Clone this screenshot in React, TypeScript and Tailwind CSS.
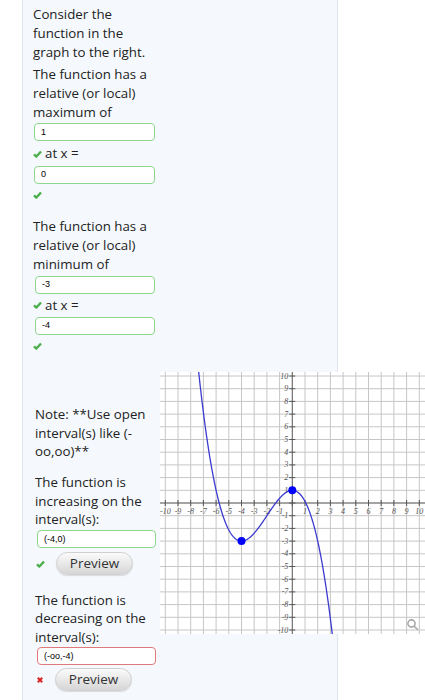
import React from "react";

const U = 12.7;
const OX = 132.3;
const OY = 131;
const X = (u: number) => OX + U * u;
const Y = (v: number) => OY - U * v;
const f = (x: number) => -(x * x * x) / 8 - (3 * x * x) / 4 + 1;

const steps = Array.from({ length: 21 }, (_, i) => i - 10);

function curvePath() {
  const pts: string[] = [];
  for (let x = -7.8; x <= 3.4; x += 0.05) {
    pts.push(`${X(x).toFixed(2)},${Y(f(x)).toFixed(2)}`);
  }
  return "M" + pts.join(" L");
}

function Graph() {
  return (
    <svg width="265" height="262" viewBox="0 0 265 262" className="block bg-white">
      {steps.map((s) => (
        <g key={s}>
          <line x1={X(s)} y1={0} x2={X(s)} y2={262} stroke="#c6c6c6" strokeWidth="1" />
          <line x1={0} y1={Y(s)} x2={265} y2={Y(s)} stroke="#c6c6c6" strokeWidth="1" />
        </g>
      ))}
      <line x1={0} y1={Y(0)} x2={265} y2={Y(0)} stroke="#666" strokeWidth="1" />
      <line x1={X(0)} y1={0} x2={X(0)} y2={262} stroke="#666" strokeWidth="1" />
      {steps.map((s) => (
        <g key={"t" + s}>
          <line x1={X(s)} y1={Y(0) - 3} x2={X(s)} y2={Y(0) + 3} stroke="#555" strokeWidth="1" />
          <line x1={X(0) - 3} y1={Y(s)} x2={X(0) + 3} y2={Y(s)} stroke="#555" strokeWidth="1" />
        </g>
      ))}
      {steps
        .filter((s) => s !== 0)
        .map((s) => (
          <g
            key={"l" + s}
            fill="#555"
            fontSize="8"
            fontStyle="italic"
            fontFamily="'Liberation Serif', serif"
          >
            <text x={X(s)} y={Y(0) + 10.5} textAnchor="middle">
              {s}
            </text>
            <text x={X(0) - 4} y={Y(s) + 2.5} textAnchor="end">
              {s}
            </text>
          </g>
        ))}
      <path d={curvePath()} fill="none" stroke="#3b3bd0" strokeWidth="1.3" />
      <circle cx={X(-4)} cy={Y(-3)} r="4" fill="#0000ff" />
      <circle cx={X(0)} cy={Y(1)} r="4" fill="#0000ff" />
      <g stroke="#a8a8a8" strokeWidth="1.6" fill="none">
        <circle cx="251.5" cy="251.5" r="3.6" />
        <line x1="254.2" y1="254.2" x2="257.5" y2="257.5" strokeLinecap="round" />
      </g>
    </svg>
  );
}

function Check() {
  return (
    <svg width="9" height="8" viewBox="0 0 9 8" className="shrink-0">
      <path d="M1 4.3 L3.4 6.6 L8 1.4" fill="none" stroke="#4aae4a" strokeWidth="2.3" strokeLinejoin="round" />
    </svg>
  );
}

function Cross() {
  return (
    <svg width="6" height="6" viewBox="0 0 6 6" className="shrink-0">
      <path d="M0.8 0.8 L5.2 5.2 M5.2 0.8 L0.8 5.2" stroke="#d22" strokeWidth="2" />
    </svg>
  );
}

function Answer({ value, bad, className }: { value: string; bad?: boolean; className: string }) {
  return (
    <input
      readOnly
      value={value}
      className={
        "block h-[18px] rounded-[4px] border-[1.5px] bg-white px-[6px] text-[9px] text-black outline-none [font-family:'Liberation_Sans',Arial,sans-serif] " +
        (bad ? "border-[#e07a7a] " : "border-[#8ed68e] ") +
        className
      }
    />
  );
}

function Preview({ className }: { className: string }) {
  return (
    <button
      className={
        "h-[23px] w-[77px] rounded-full border border-[#d0d0d0] bg-linear-to-b from-[#fbfbfb] to-[#d6d6d6] text-[13.5px] leading-none text-[#333] shadow-[0_1px_1px_rgba(0,0,0,0.12)] " +
        className
      }
    >
      Preview
    </button>
  );
}

export default function App() {
  return (
    <div className="relative h-[700px] w-[425px] overflow-hidden bg-white text-[13.3px] text-[#222] [font-family:'Open_Sans',sans-serif]">
      <div className="ml-[22px] h-[700px] w-[316px] border-x border-[#dfe5ec] bg-[#f5f9fd] pl-[10px]">
        <div className="w-[124px] whitespace-nowrap leading-[19px]">
          <p className="pt-[5px]">
            Consider the
            <br />
            function in the
            <br />
            graph to the right.
          </p>
          <p className="mt-[2.5px]">
            The function has a
            <br />
            relative (or local)
            <br />
            maximum of
          </p>
          <Answer value="1" className="mt-[1.5px] ml-[1px] w-[121px]" />
          <div className="mt-[3px] flex items-center">
            <Check />
            <span className="ml-[3px]">at x =</span>
          </div>
          <Answer value="0" className="mt-[2.5px] ml-[1px] w-[121px]" />
          <div className="mt-[2.3px] flex h-[19px] items-center">
            <Check />
          </div>
          <p className="mt-[12.5px]">
            The function has a
            <br />
            relative (or local)
            <br />
            minimum of
          </p>
          <Answer value="-3" className="mt-[1.5px] ml-[2px] w-[120px]" />
          <div className="mt-[2.2px] flex items-center">
            <Check />
            <span className="ml-[3px]">at x =</span>
          </div>
          <Answer value="-4" className="mt-[2px] ml-[2px] w-[120px]" />
          <div className="mt-[1.2px] flex h-[19px] items-center">
            <Check />
          </div>
        </div>
        <div className="w-[124px] whitespace-nowrap pl-[2px] leading-[18.5px]">
          <p className="mt-[50px]">
            Note: **Use open
            <br />
            interval(s) like (-
            <br />
            oo,oo)**
          </p>
          <p className="mt-[12.8px]">
            The function is
            <br />
            increasing on the
            <br />
            interval(s):
          </p>
          <Answer value="(-4,0)" className="mt-[1.5px] ml-[2px] w-[119px]" />
          <div className="mt-[3.7px] flex items-center">
            <span className="ml-[1px]">
              <Check />
            </span>
            <Preview className="ml-[11px]" />
          </div>
          <p className="mt-[15.7px]">
            The function is
            <br />
            decreasing on the
            <br />
            interval(s):
          </p>
          <Answer value="(-oo,-4)" bad className="mt-[0.5px] ml-[2px] w-[119px]" />
          <div className="mt-[3.6px] flex items-center">
            <span className="ml-[2px]">
              <Cross />
            </span>
            <Preview className="ml-[12px]" />
          </div>
        </div>
      </div>
      <div className="absolute left-[160px] top-[372px]">
        <Graph />
      </div>
    </div>
  );
}
